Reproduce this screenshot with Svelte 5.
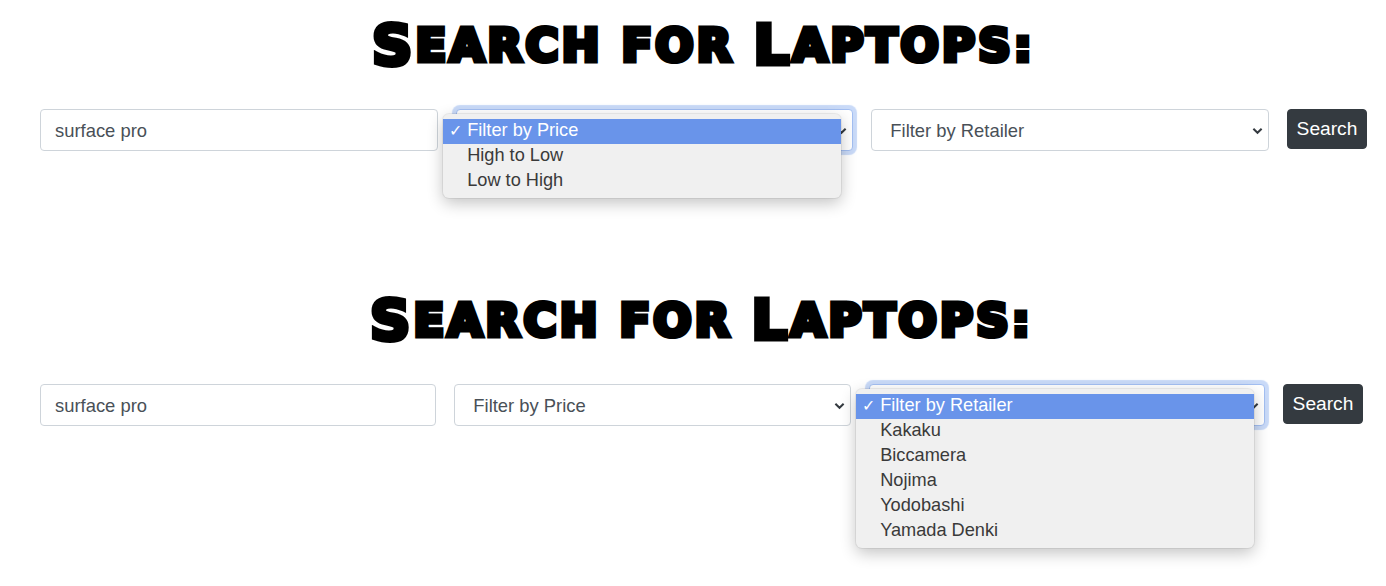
<script>
  const sections = [
    {
      variant: 'first',
      open: 'price',
      menu: ['Filter by Price', 'High to Low', 'Low to High'],
    },
    {
      variant: 'second',
      open: 'retailer',
      menu: ['Filter by Retailer', 'Kakaku', 'Biccamera', 'Nojima', 'Yodobashi', 'Yamada Denki'],
    },
  ];

  const filters = [
    { id: 'price', label: 'Filter by Price' },
    { id: 'retailer', label: 'Filter by Retailer' },
  ];
</script>

<main class="page">
  {#each sections as section}
    <section class="search {section.variant}">
      <h1 class="title"><span class="big">S</span>earch for <span class="big">L</span>aptops:</h1>
      <form class="search-row" onsubmit={(e) => e.preventDefault()}>
        <input class="control text-input" type="text" value="surface pro" />
        {#each filters as filter}
          <div class="select-wrap">
            <div class="control select" class:focused={section.open === filter.id}>
              {#if section.open !== filter.id}<span>{filter.label}</span>{/if}
              <svg class="chevron" viewBox="0 0 12 8" width="11" height="8" aria-hidden="true">
                <path d="M1.5 1.6 6 6l4.5-4.4" fill="none" stroke="#343a40" stroke-width="2.2" />
              </svg>
            </div>
            {#if section.open === filter.id}
              <ul class="menu">
                {#each section.menu as item, i}
                  <li class:selected={i === 0}>
                    {#if i === 0}<span class="check">✓</span>{/if}
                    {item}
                  </li>
                {/each}
              </ul>
            {/if}
          </div>
        {/each}
        <button class="search-btn" type="submit">Search</button>
      </form>
    </section>
  {/each}
</main>

<style>
  :global(body) {
    margin: 0;
    background: #fff;
    font-family: "Liberation Sans", Arial, sans-serif;
  }

  .page {
    height: 586px;
    overflow: hidden;
  }

  .search {
    padding-left: 40px;
    box-sizing: border-box;
  }

  .first {
    padding-right: 19px;
    height: 275px;
  }

  .second {
    padding-right: 23px;
  }

  .title {
    margin: 0;
    height: 109px;
    padding-top: 14px;
    box-sizing: border-box;
    text-align: center;
    font-family: "DejaVu Sans", sans-serif;
    font-size: 45px;
    line-height: 64px;
    font-weight: 700;
    text-transform: uppercase;
    letter-spacing: 3.2px;
    color: #000;
    -webkit-text-stroke: 5px #000;
    white-space: nowrap;
  }

  .big {
    font-size: 56px;
    line-height: 0;
    vertical-align: -3px;
  }

  .search-row {
    display: grid;
    grid-template-columns: 1fr 1fr 1fr auto;
    align-items: start;
    gap: 18px;
  }

  .control {
    box-sizing: border-box;
    width: 100%;
    height: 42px;
    border: 1px solid #ced4da;
    border-radius: 4px;
    background: #fff;
    color: #495057;
    font: 18.4px "Liberation Sans", Arial, sans-serif;
  }

  .text-input {
    min-width: 0;
    padding: 2px 14px 0;
    outline: none;
  }

  .select-wrap {
    position: relative;
    min-width: 0;
  }

  .select {
    display: flex;
    align-items: center;
    justify-content: space-between;
    padding: 1px 5px 0 18px;
  }

  .select.focused {
    justify-content: flex-end;
    border-color: #a3bff2;
    box-shadow: 0 0 1px 4px #c9daf8;
  }

  .chevron {
    display: block;
  }

  .menu {
    position: absolute;
    z-index: 2;
    top: 5px;
    left: -12.5px;
    width: 398px;
    margin: 0;
    padding: 5px 0 4px;
    box-sizing: border-box;
    list-style: none;
    background: #f0f0f0;
    border-radius: 6px;
    box-shadow: 0 0 0 1px rgba(0, 0, 0, 0.06), 0 5px 16px rgba(0, 0, 0, 0.24);
    color: #3a3a3a;
    font-size: 18.2px;
  }

  .menu li {
    position: relative;
    height: 25px;
    line-height: 22px;
    padding-left: 24px;
  }

  .menu li.selected {
    background: #6994ea;
    color: #fff;
  }

  .check {
    position: absolute;
    left: 6px;
    top: 1px;
    font-size: 16px;
  }

  .search-btn {
    box-sizing: border-box;
    width: 80px;
    height: 40px;
    border: 1px solid #343a40;
    border-radius: 4px;
    background: #343a40;
    color: #fff;
    font: 19.2px "Liberation Sans", Arial, sans-serif;
    padding: 0;
  }
</style>
